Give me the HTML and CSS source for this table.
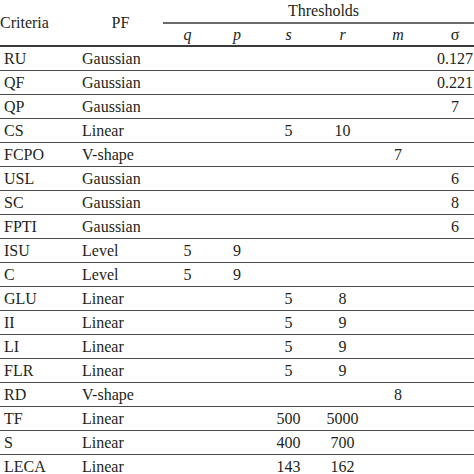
FILE: index.html
```html
<!DOCTYPE html>
<html lang="en">
<head>
<meta charset="utf-8">
<title>Criteria thresholds</title>
<link rel="stylesheet" href="styles.css">
</head>
<body>
<table class="tbl">
  <colgroup>
    <col class="c-crit"><col class="c-pf">
    <col class="c-q"><col class="c-p"><col class="c-s"><col class="c-r"><col class="c-m"><col class="c-sig">
  </colgroup>
  <thead>
    <tr class="h1">
      <th class="crit" rowspan="2">Criteria</th>
      <th class="pf" rowspan="2">PF</th>
      <th class="thr" colspan="6">Thresholds</th>
    </tr>
    <tr class="h2">
      <th class="sym"><i>q</i></th>
      <th class="sym"><i>p</i></th>
      <th class="sym"><i>s</i></th>
      <th class="sym"><i>r</i></th>
      <th class="sym"><i>m</i></th>
      <th class="sym">σ</th>
    </tr>
  </thead>
  <tbody>
    <tr><td>RU</td><td>Gaussian</td><td></td><td></td><td></td><td></td><td></td><td class="sig">0.127</td></tr>
    <tr><td>QF</td><td>Gaussian</td><td></td><td></td><td></td><td></td><td></td><td class="sig">0.221</td></tr>
    <tr><td>QP</td><td>Gaussian</td><td></td><td></td><td></td><td></td><td></td><td class="sig">7</td></tr>
    <tr><td>CS</td><td>Linear</td><td></td><td></td><td>5</td><td>10</td><td></td><td></td></tr>
    <tr><td>FCPO</td><td>V-shape</td><td></td><td></td><td></td><td></td><td>7</td><td></td></tr>
    <tr><td>USL</td><td>Gaussian</td><td></td><td></td><td></td><td></td><td></td><td class="sig">6</td></tr>
    <tr><td>SC</td><td>Gaussian</td><td></td><td></td><td></td><td></td><td></td><td class="sig">8</td></tr>
    <tr><td>FPTI</td><td>Gaussian</td><td></td><td></td><td></td><td></td><td></td><td class="sig">6</td></tr>
    <tr><td>ISU</td><td>Level</td><td>5</td><td>9</td><td></td><td></td><td></td><td></td></tr>
    <tr><td>C</td><td>Level</td><td>5</td><td>9</td><td></td><td></td><td></td><td></td></tr>
    <tr><td>GLU</td><td>Linear</td><td></td><td></td><td>5</td><td>8</td><td></td><td></td></tr>
    <tr><td>II</td><td>Linear</td><td></td><td></td><td>5</td><td>9</td><td></td><td></td></tr>
    <tr><td>LI</td><td>Linear</td><td></td><td></td><td>5</td><td>9</td><td></td><td></td></tr>
    <tr><td>FLR</td><td>Linear</td><td></td><td></td><td>5</td><td>9</td><td></td><td></td></tr>
    <tr><td>RD</td><td>V-shape</td><td></td><td></td><td></td><td></td><td>8</td><td></td></tr>
    <tr><td>TF</td><td>Linear</td><td></td><td></td><td>500</td><td>5000</td><td></td><td></td></tr>
    <tr><td>S</td><td>Linear</td><td></td><td></td><td>400</td><td>700</td><td></td><td></td></tr>
    <tr><td>LECA</td><td>Linear</td><td></td><td></td><td>143</td><td>162</td><td></td><td></td></tr>
  </tbody>
</table>
</body>
</html>
```

FILE: styles.css
```css
html, body {
  margin: 0;
  padding: 0;
  background: #ffffff;
  overflow: hidden;
  height: 474px;
  width: 474px;
}

.tbl {
  border-collapse: separate;
  border-spacing: 0;
  table-layout: fixed;
  width: 484px;
  font-family: "Liberation Serif", "Times New Roman", serif;
  font-size: 16px;
  color: #231f20;
}

.c-crit { width: 78px; }
.c-pf { width: 85px; }
.c-q { width: 49px; }
.c-p { width: 50px; }
.c-s { width: 53px; }
.c-r { width: 55px; }
.c-m { width: 56px; }
.c-sig { width: 58px; }

.tbl th, .tbl td {
  padding: 0;
  font-weight: normal;
  line-height: 18px;
  vertical-align: middle;
  white-space: nowrap;
}

.h1 { height: 24px; }
.h2 { height: 23px; }

.crit {
  text-align: left;
  padding-left: 1px;
  border-bottom: 2px solid #3a3a3a;
}

.pf {
  text-align: center;
  padding-right: 10px;
  border-bottom: 2px solid #3a3a3a;
}

.thr {
  text-align: center;
  border-bottom: 2px solid #6a6a6a;
}

.sym {
  text-align: center;
  border-bottom: 2px solid #3a3a3a;
  padding-top: 2px;
}

.tbl tbody tr { height: 24px; }

.tbl td {
  border-bottom: 1px solid #4a4a4a;
  text-align: center;
}

.tbl td:first-child,
.tbl td:nth-child(2) {
  text-align: left;
  padding-left: 4px;
}
```
